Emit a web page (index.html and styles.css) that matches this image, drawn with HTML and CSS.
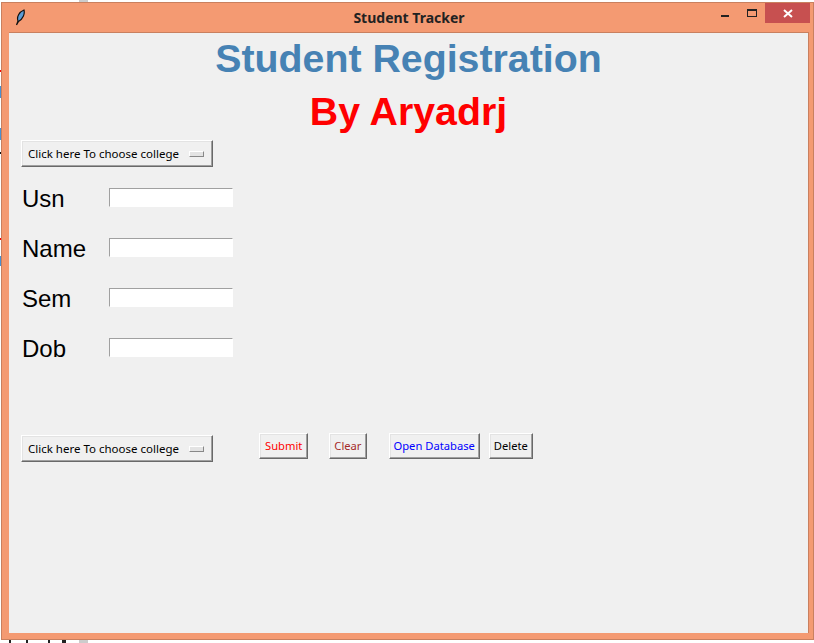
FILE: index.html
```html
<html>
<head>
<title>Student Tracker</title>
<link rel="stylesheet" href="styles.css">
</head>
<body>
<div class="window">
	<div class="titlebar">
		<svg class="feather" width="10" height="17" viewBox="0 0 10 17">
			<path d="M1.5 16 L3 12 C1.5 8 4 3 9 1 C10 5 8 10 3.5 12.5 Z" fill="#5b9bd5" stroke="#111" stroke-width="1.2"/>
		</svg>
		<span class="title">Student Tracker</span>
		<div class="controls">
			<span class="min"></span>
			<span class="max"></span>
			<span class="close">
				<svg width="10" height="9" viewBox="0 0 10 9"><path d="M1 1 L9 8 M9 1 L1 8" stroke="#fff" stroke-width="2"/></svg>
			</span>
		</div>
	</div>
	<div class="client">
		<h1 class="blue">Student Registration</h1>
		<h1 class="red">By Aryadrj</h1>
		<div class="menu top-menu">Click here To choose college<span class="indicator"></span></div>
		<div class="fields">
			<div class="field"><label>Usn</label><input type="text"></div>
			<div class="field"><label>Name</label><input type="text"></div>
			<div class="field"><label>Sem</label><input type="text"></div>
			<div class="field"><label>Dob</label><input type="text"></div>
		</div>
		<div class="actions">
			<div class="menu">Click here To choose college<span class="indicator"></span></div>
			<button class="btn submit">Submit</button>
			<button class="btn clear">Clear</button>
			<button class="btn open">Open Database</button>
			<button class="btn delete">Delete</button>
		</div>
	</div>
</div>
</body>
</html>
```

FILE: styles.css
```css
html, body {
	margin: 0;
	height: 100%;
}

/* the desktop behind the window only shows as specks along the edges */
body {
	background-color: #fff;
	background-image:
		linear-gradient(#fff 70px, #f00 70px, #f00 72px, #fff 72px, #fff 86px, #4a90d0 86px, #4a90d0 98px, #fff 98px, #fff 128px, #4a90d0 128px, #4a90d0 140px, #fff 140px, #fff 152px, #111 152px, #111 154px, #fff 154px, #fff 238px, #f00 238px, #f00 240px, #fff 240px, #fff 256px, #4a90d0 256px, #4a90d0 266px, #fff 266px),
		linear-gradient(90deg, #fff 79px, #ccc 79px, #ccc 88px, #fff 88px),
		linear-gradient(90deg, #fff 9px, #222 9px, #222 11px, #fff 11px, #fff 26px, #222 26px, #222 28px, #fff 28px, #fff 48px, #222 48px, #222 50px, #fff 50px, #fff 62px, #222 62px, #222 66px, #fff 66px, #fff 79px, #ccc 79px, #ccc 88px, #fff 88px);
	background-size: 1px 300px, 100% 2px, 100% 3px;
	background-position: 0 0, 0 0, 0 100%;
	background-repeat: no-repeat;
	padding: 2px 0 3px 1px;
	box-sizing: border-box;
	font-family: 'Noto Sans', sans-serif;
	font-size: 11.5px;
}

.window {
	height: 100%;
	box-sizing: border-box;
	background: #f49a72;
	border: 1px solid #c9805f;
	padding: 0 4px 6px 7px;
	display: flex;
	flex-direction: column;
}

.titlebar {
	height: 29px;
	flex: 0 0 auto;
	display: flex;
	align-items: center;
	position: relative;
}

.feather {
	margin: 0 0 1px 6px;
}

.title {
	position: absolute;
	left: 0;
	right: 0;
	top: 5px;
	text-align: center;
	font-weight: bold;
	font-size: 14px;
	color: #222;
}

.controls {
	position: absolute;
	right: -1px;
	top: 0;
	display: flex;
	align-items: flex-start;
}

.min {
	width: 8px;
	height: 2px;
	background: #222;
	margin: 12px 18px 0 0;
}

.max {
	width: 8px;
	height: 5px;
	border: 1px solid #222;
	border-top-width: 2px;
	margin: 6px 0 0;
}

.close {
	width: 45px;
	height: 20px;
	background: #c75050;
	margin-left: 8px;
	display: flex;
	align-items: center;
	justify-content: center;
}

.client {
	flex: 1;
	background: #f0f0f0;
	border: 1px solid #c9805f;
	border-width: 1px 1px 0 0;
	padding: 0 12px;
}

h1 {
	margin: 0;
	text-align: center;
	font-family: 'Liberation Sans', sans-serif;
	font-weight: bold;
	font-size: 39.3px;
	line-height: 53px;
}

.blue {
	color: #4682b4;
	margin-top: -1px;
}

.red {
	color: #f00;
}

.menu {
	width: 192px;
	height: 27px;
	box-sizing: border-box;
	display: flex;
	align-items: center;
	justify-content: space-between;
	padding: 0 8px 0 6px;
	background: #f0f0f0;
	color: #000;
	border: 1px solid;
	border-color: #fff #696969 #696969 #fff;
	box-shadow: inset -1px -1px 0 #a0a0a0, inset 1px 1px 0 #e3e3e3;
}

.top-menu {
	margin-top: 2px;
}

.indicator {
	width: 13px;
	height: 4px;
	background: #e3e3e3;
	border: 1px solid;
	border-color: #fff #888 #888 #fff;
}

.fields {
	display: flex;
	flex-direction: column;
	gap: 30px;
	margin-top: 22px;
}

.field {
	display: flex;
	align-items: center;
	height: 20px;
}

.field label {
	width: 87px;
	padding-left: 1px;
	font-family: 'Liberation Sans', sans-serif;
	font-size: 24px;
}

.field input {
	width: 124px;
	height: 19px;
	box-sizing: border-box;
	margin: 0 0 4px;
	padding: 0;
	background: #fff;
	border: 1px solid #fff;
	border-color: #a0a0a0 #fff #fff #a0a0a0;
}

.actions {
	display: flex;
	align-items: flex-start;
	margin-top: 76px;
}

.btn {
	height: 26px;
	box-sizing: border-box;
	margin: -2px 0 0;
	padding: 0 4px 2px;
	font-family: 'Noto Sans', sans-serif;
	font-size: 11.2px;
	background: #f0f0f0;
	border: 1px solid;
	border-color: #fff #696969 #696969 #fff;
	box-shadow: inset -1px -1px 0 #a0a0a0, inset 1px 1px 0 #e3e3e3;
}

.submit {
	color: #f00;
	margin-left: 46px;
	padding: 0 5px 2px;
}

.clear {
	color: #a52a2a;
	margin-left: 21px;
}

.open {
	color: #00f;
	margin-left: 22px;
}

.delete {
	color: #000;
	margin-left: 9px;
}
```
